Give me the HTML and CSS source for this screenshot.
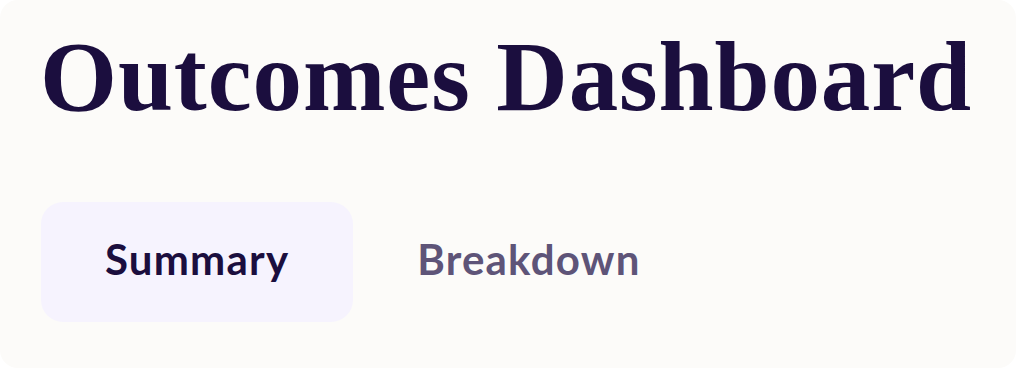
FILE: index.html
```html
<!DOCTYPE html>
<html lang="en">
<head>
<meta charset="utf-8">
<title>Outcomes Dashboard</title>
<link rel="stylesheet" href="styles.css">
</head>
<body>
<main class="card">
  <h1 class="title">Outcomes Dashboard</h1>
  <nav class="tabs">
    <button class="tab tab-active" type="button">Summary</button>
    <button class="tab" type="button">Breakdown</button>
  </nav>
</main>
</body>
</html>
```
FILE: styles.css
```css
html, body {
  margin: 0;
  padding: 0;
  background: #ffffff;
}

.card {
  box-sizing: border-box;
  width: 1016px;
  height: 368px;
  background: #fcfbf9;
  border-radius: 18px;
  padding: 27px 40px 0 40px;
  overflow: hidden;
}

.title {
  margin: 0;
  font-family: "Liberation Serif", serif;
  font-weight: 700;
  font-size: 99px;
  line-height: 99px;
  letter-spacing: 0.9px;
  color: #1b0e3e;
  white-space: nowrap;
}

.tabs {
  display: flex;
  gap: 0;
  margin-top: 76px;
  margin-left: 1px;
}

.tab {
  border: 0;
  background: transparent;
  height: 120px;
  padding: 0 64px 6px 64px;
  border-radius: 22px;
  font-family: "Lato", "Liberation Sans", sans-serif;
  font-weight: 700;
  font-size: 42px;
  letter-spacing: 1.2px;
  color: #5e5478;
}

.tab-active {
  background: #f6f3fe;
  color: #1b0e3e;
}
```
